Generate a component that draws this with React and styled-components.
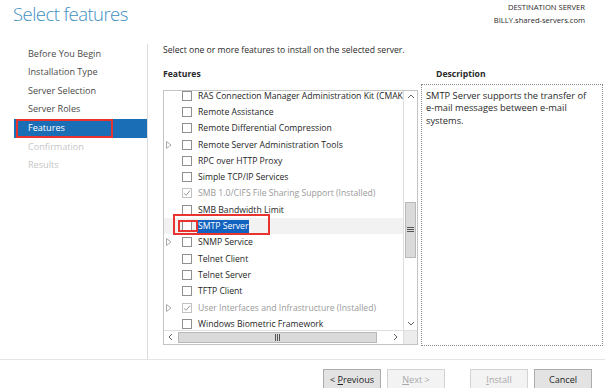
import React from "react";
import styled, { createGlobalStyle } from "styled-components";

const Global = createGlobalStyle`
  html, body { margin: 0; padding: 0; background: #fff; }
  body { font-family: "Open Sans", "Noto Sans", sans-serif; color: #1e1e1e; }
  * { box-sizing: border-box; }
`;

const Page = styled.div`
  width: 605px;
  height: 388px;
  overflow: hidden;
  display: flex;
  flex-direction: column;
  background: #fff;
  font-size: 8.65px;
`;

const Header = styled.div`
  height: 44px;
  flex: none;
  display: flex;
  justify-content: space-between;
`;

const Title = styled.h1`
  margin: 0;
  padding-left: 13px;
  font-weight: 300;
  font-size: 18.5px;
  letter-spacing: -0.55px;
  line-height: 28px;
  color: #3e8fbf;
`;

const Dest = styled.div`
  padding: 1px 20px 0 0;
  text-align: right;
  font-size: 7.6px;
  line-height: 13px;
  color: #2a2a2a;
`;

const Main = styled.div`
  flex: 1;
  display: flex;
  min-height: 0;
`;

const Nav = styled.nav`
  width: 148px;
  flex: none;
  border-right: 1px solid #dcdcdc;
  padding-top: 0.5px;
`;

const NavItem = styled.div`
  position: relative;
  margin-left: 14px;
  width: 133px;
  height: 18.67px;
  line-height: 18.67px;
  padding-left: 14px;
  font-size: 9.1px;
  color: ${(p) => (p.$active ? "#fff" : p.$disabled ? "#c6c6c6" : "#4a4a4a")};
  background: ${(p) => (p.$active ? "#1a6eb6" : "transparent")};
`;

const RedMark = styled.div`
  position: absolute;
  border: 2px solid #e8332f;
  pointer-events: none;
`;

const Content = styled.div`
  flex: 1;
  padding: 0 2px 0 15px;
  display: flex;
  flex-direction: column;
`;

const Intro = styled.div`
  line-height: 13px;
  color: #2a2a2a;
`;

const Columns = styled.div`
  display: grid;
  grid-template-columns: 255px 182px;
  column-gap: 3px;
`;

const ColHead = styled.div`
  padding: 11px 0 0 ${(p) => p.$indent || 0}px;
  height: 24px;
  line-height: 13px;
  font-weight: 700;
  color: #2a2a2a;
`;

const ListBox = styled.div`
  margin-top: 9px;
  height: 255px;
  border: 1px solid #c4c4c4;
  display: grid;
  grid-template-columns: 1fr 14px;
  grid-template-rows: 239px 14px;
`;

const Rows = styled.div`
  overflow: hidden;
  position: relative;
`;

const RowsInner = styled.div`
  margin-top: -3.5px;
`;

const Row = styled.div`
  position: relative;
  height: 16.3px;
  display: flex;
  align-items: center;
  padding-left: 2px;
  background: ${(p) => (p.$hover ? "#f2f2f2" : "transparent")};
  white-space: nowrap;
`;

const Expander = styled.span`
  width: 16px;
  flex: none;
  display: flex;
  align-items: center;
`;

const Check = styled.span`
  width: 10px;
  height: 10px;
  flex: none;
  margin-right: 6px;
  border: 1px solid ${(p) => (p.$checked ? "#c2c2c2" : "#8f8f8f")};
  background: #fff;
  display: flex;
  align-items: center;
  justify-content: center;
`;

const Label = styled.span`
  color: ${(p) => (p.$muted ? "#9a9a9a" : "#262626")};
  ${(p) =>
    p.$selected &&
    `background:#1163bf;color:#fff;padding:0 1px;margin-left:-1px;line-height:13px;`}
`;

const VScroll = styled.div`
  border-left: 1px solid #dedede;
  display: flex;
  flex-direction: column;
  background: #fff;
`;

const ArrowBtn = styled.div`
  height: ${(p) => p.$h || 12}px;
  width: ${(p) => p.$w || "auto"};
  flex: none;
  display: flex;
  align-items: center;
  justify-content: center;
`;

const VTrack = styled.div`
  flex: 1;
  display: flex;
  flex-direction: column;
`;

const VThumb = styled.div`
  height: 56px;
  margin: 0 1px;
  background: #dadada;
  border: 1px solid #b9b9b9;
  display: flex;
  align-items: center;
  justify-content: center;
`;

const HScroll = styled.div`
  border-top: 1px solid #dedede;
  display: flex;
  background: #fff;
`;

const HThumb = styled.div`
  width: 199px;
  margin: 1px 0;
  background: #dadada;
  border: 1px solid #b9b9b9;
  display: flex;
  align-items: center;
  justify-content: center;
`;

const Spacer = styled.div`
  flex: 1;
`;

const Corner = styled.div`
  background: #ececec;
  border-top: 1px solid #dedede;
  border-left: 1px solid #dedede;
`;

const DescBox = styled.div`
  margin-top: 3px;
  height: 262px;
  border: 1px dotted #8a8a8a;
  padding: 4.5px 4px;
  font-size: 9.3px;
  line-height: 12.5px;
  color: #2a2a2a;
  white-space: nowrap;
`;

const Footer = styled.div`
  height: 29px;
  flex: none;
  border-top: 1px solid #e4e4e4;
  display: flex;
  justify-content: flex-end;
  align-items: flex-start;
  padding: 9px 13px 0 0;
`;

const Btn = styled.div`
  width: 58px;
  height: 22px;
  margin-left: ${(p) => p.$gap || 0}px;
  border: 1px solid ${(p) => (p.$disabled ? "#d3d3d3" : "#acacac")};
  background: ${(p) => (p.$disabled ? "#f3f3f3" : "#e3e3e3")};
  color: ${(p) => (p.$disabled ? "#a8a8a8" : "#1e1e1e")};
  display: flex;
  justify-content: center;
  padding-top: 3px;
  line-height: 13px;
  font-size: 9.1px;
  u { text-decoration: underline; }
`;

const Tri = () => (
  <svg width="6" height="8" viewBox="0 0 6 8">
    <path d="M0.5 0.5 L5 4 L0.5 7.5 Z" fill="none" stroke="#a9a9a9" strokeWidth="1" />
  </svg>
);

const Tick = () => (
  <svg width="8" height="8" viewBox="0 0 8 8">
    <path d="M1 4.2 L3.1 6.3 L7 1.5" fill="none" stroke="#9a9a9a" strokeWidth="1" />
  </svg>
);

const Chevron = ({ dir }) => {
  const d = {
    up: "M1 5 L4 2 L7 5",
    down: "M1 2 L4 5 L7 2",
    left: "M5 1 L2 4 L5 7",
    right: "M2 1 L5 4 L2 7",
  }[dir];
  return (
    <svg width="8" height="8" viewBox="0 0 8 8">
      <path d={d} fill="none" stroke="#606060" strokeWidth="1" />
    </svg>
  );
};

const GripV = () => (
  <svg width="7" height="6" viewBox="0 0 7 6">
    <path d="M0 0.5 H7 M0 2.5 H7 M0 4.5 H7" stroke="#555" strokeWidth="1" />
  </svg>
);

const GripH = () => (
  <svg width="6" height="7" viewBox="0 0 6 7">
    <path d="M0.5 0 V7 M2.5 0 V7 M4.5 0 V7" stroke="#555" strokeWidth="1" />
  </svg>
);

const navItems = [
  { t: "Before You Begin" },
  { t: "Installation Type" },
  { t: "Server Selection" },
  { t: "Server Roles" },
  { t: "Features", active: true },
  { t: "Confirmation", disabled: true },
  { t: "Results", disabled: true },
];

const features = [
  { t: "RAS Connection Manager Administration Kit (CMAK)" },
  { t: "Remote Assistance" },
  { t: "Remote Differential Compression" },
  { t: "Remote Server Administration Tools", exp: true },
  { t: "RPC over HTTP Proxy" },
  { t: "Simple TCP/IP Services" },
  { t: "SMB 1.0/CIFS File Sharing Support (Installed)", checked: true },
  { t: "SMB Bandwidth Limit" },
  { t: "SMTP Server", selected: true },
  { t: "SNMP Service", exp: true },
  { t: "Telnet Client" },
  { t: "Telnet Server" },
  { t: "TFTP Client" },
  { t: "User Interfaces and Infrastructure (Installed)", checked: true, exp: true },
  { t: "Windows Biometric Framework" },
];

export default function App() {
  return (
    <>
      <Global />
      <Page>
        <Header>
          <Title>Select features</Title>
          <Dest>
            DESTINATION SERVER
            <br />
            BILLY.shared-servers.com
          </Dest>
        </Header>
        <Main>
          <Nav>
            {navItems.map((n) => (
              <NavItem key={n.t} $active={n.active} $disabled={n.disabled}>
                {n.t}
                {n.active && (
                  <RedMark style={{ left: 2, top: 0, width: 97, height: 19 }} />
                )}
              </NavItem>
            ))}
          </Nav>
          <Content>
            <Intro>Select one or more features to install on the selected server.</Intro>
            <Columns>
              <div>
                <ColHead>Features</ColHead>
                <ListBox>
                  <Rows>
                    <RowsInner>
                      {features.map((f) => (
                        <Row key={f.t} $hover={f.selected}>
                          <Expander>{f.exp && <Tri />}</Expander>
                          <Check $checked={f.checked}>{f.checked && <Tick />}</Check>
                          <Label $muted={f.checked} $selected={f.selected}>
                            {f.t}
                          </Label>
                          {f.selected && (
                            <>
                              <RedMark style={{ left: 9, top: -4, width: 97, height: 21 }} />
                              <RedMark style={{ left: 14, top: 2, width: 20, height: 12 }} />
                            </>
                          )}
                        </Row>
                      ))}
                    </RowsInner>
                  </Rows>
                  <VScroll>
                    <ArrowBtn $h={12}>
                      <Chevron dir="up" />
                    </ArrowBtn>
                    <VTrack>
                      <VThumb style={{ marginTop: 99 }}>
                        <GripV />
                      </VThumb>
                    </VTrack>
                    <ArrowBtn $h={12}>
                      <Chevron dir="down" />
                    </ArrowBtn>
                  </VScroll>
                  <HScroll>
                    <ArrowBtn $w="14px">
                      <Chevron dir="left" />
                    </ArrowBtn>
                    <HThumb>
                      <GripH />
                    </HThumb>
                    <Spacer />
                    <ArrowBtn $w="14px">
                      <Chevron dir="right" />
                    </ArrowBtn>
                  </HScroll>
                  <Corner />
                </ListBox>
              </div>
              <div>
                <ColHead $indent={15}>Description</ColHead>
                <DescBox>
                  SMTP Server supports the transfer of
                  <br />
                  e-mail messages between e-mail
                  <br />
                  systems.
                </DescBox>
              </div>
            </Columns>
          </Content>
        </Main>
        <Footer>
          <Btn>
            &lt;&nbsp;<u>P</u>revious
          </Btn>
          <Btn $disabled $gap={6}>
            <u>N</u>ext &gt;
          </Btn>
          <Btn $disabled $gap={25}>
            <u>I</u>nstall
          </Btn>
          <Btn $gap={6}>Cancel</Btn>
        </Footer>
      </Page>
    </>
  );
}
